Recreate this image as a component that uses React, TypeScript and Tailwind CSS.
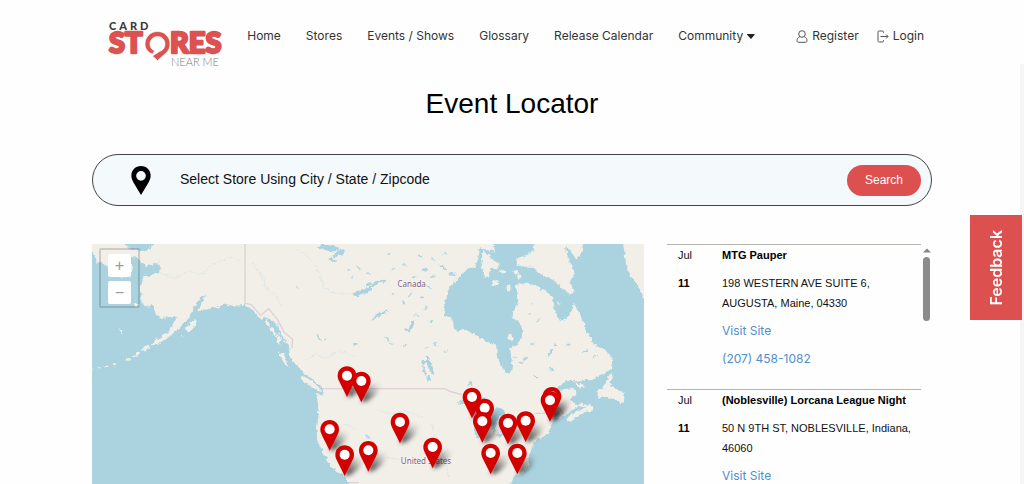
import { useState } from 'react';

const navItems = [
  { label: 'Home', href: '#home' },
  { label: 'Stores', href: '#stores' },
  { label: 'Events / Shows', href: '#events' },
  { label: 'Glossary', href: '#glossary' },
  { label: 'Release Calendar', href: '#releases' },
  { label: 'Community', href: '#community', hasDropdown: true },
];

const events = [
  {
    month: 'Jul',
    day: '11',
    title: 'MTG Pauper',
    address: '198 WESTERN AVE SUITE 6, AUGUSTA, Maine, 04330',
    phone: '(207) 458-1082',
  },
  {
    month: 'Jul',
    day: '11',
    title: '(Noblesville) Lorcana League Night',
    address: '50 N 9TH ST, NOBLESVILLE, Indiana, 46060',
  },
];

// tip of each marker, in map units
const markers = [
  [765, 459],
  [808, 475],
  [713, 620],
  [758, 696],
  [829, 683],
  [924, 598],
  [1022, 673],
  [1140, 523],
  [1178, 556],
  [1171, 596],
  [1248, 601],
  [1301, 594],
  [1380, 521],
  [1374, 533],
  [1196, 691],
  [1276, 691],
];

// x, y, length, thickness, angle
const lakes = [
  [712, 12, 60, 16, 10],
  [740, 28, 44, 14, -30],
  [722, 48, 26, 8, 20],
  [690, 8, 30, 6, -10],
  [812, 143, 54, 16, -18],
  [792, 154, 22, 8, 40],
  [828, 122, 20, 8, -35],
  [680, 280, 26, 4, 60],
  [700, 286, 16, 3, -30],
  [790, 300, 16, 6, 0],
  [615, 128, 12, 4, 20],
  [770, 78, 10, 5, 0],
  [800, 72, 16, 4, 40],
  [782, 98, 12, 4, 70],
  [828, 90, 14, 4, 0],
  [846, 122, 38, 10, -30],
  [870, 112, 26, 8, -10],
  [868, 208, 46, 7, -20],
  [848, 222, 24, 6, -40],
  [958, 245, 34, 9, -65],
  [946, 258, 18, 7, 40],
  [1014, 366, 62, 13, 70],
  [1000, 352, 26, 8, -20],
  [996, 378, 36, 6, 70],
  [1010, 402, 18, 7, 90],
  [1137, 417, 14, 12, 0],
  [884, 285, 18, 5, 30],
  [896, 300, 12, 4, 0],
  [940, 305, 14, 4, -20],
  [1005, 312, 12, 4, 0],
  [1030, 300, 14, 4, 60],
  [1062, 322, 12, 4, -30],
  [975, 215, 18, 5, 20],
  [1000, 192, 16, 4, -40],
  [1016, 232, 12, 4, 0],
  [934, 176, 16, 5, 30],
  [902, 150, 12, 4, -20],
  [956, 150, 18, 4, -60],
  [990, 160, 14, 5, 0],
  [1010, 128, 18, 5, 20],
  [966, 100, 20, 5, -30],
  [1000, 78, 22, 7, 10],
  [1024, 98, 16, 5, -20],
  [1052, 70, 22, 5, 30],
  [1082, 90, 26, 5, 10],
  [1020, 44, 18, 6, 50],
  [984, 38, 14, 5, -10],
  [938, 64, 12, 4, 20],
  [904, 74, 16, 4, -40],
  [1060, 30, 14, 5, 0],
  [890, 30, 14, 4, 0],
  [1320, 180, 12, 4, 60],
  [1314, 210, 12, 4, 0],
  [1340, 230, 16, 4, -30],
  [1300, 345, 24, 6, -45],
  [1286, 356, 16, 5, 20],
  [1322, 300, 14, 5, 0],
  [1376, 326, 26, 7, -60],
  [1390, 302, 14, 5, 30],
  [1378, 375, 18, 6, 40],
  [1432, 302, 18, 5, 0],
  [1480, 322, 26, 6, -20],
  [1510, 338, 20, 5, -30],
  [1330, 400, 14, 5, 20],
  [1270, 340, 12, 5, 0],
  [827, 578, 14, 8, 60],
];

const islands = [
  // Aleutians
  'M262 232 L250 250 L236 276 L210 292 L190 304 L182 316 L200 314 L222 302 L244 284 L266 266 L288 244 L302 228Z',
  'M178 314 L160 322 L154 332 L168 330 L180 322Z',
  'M146 336 L128 346 L132 352 L146 344Z',
  'M122 352 L108 358 L106 364 L118 362Z',
  'M76 370 L66 374 L70 377 L80 374Z',
  'M56 376 L40 379 L42 382 L56 380Z',
  'M30 381 L20 384 L28 386Z',
  'M12 386 L4 388 L8 392Z',
  // Kodiak
  'M318 238 L300 250 L288 264 L292 276 L306 270 L318 258Z',
  'M272 292 L276 288 L282 291Z',
  'M84 268 L92 270 L98 284 L90 276Z',
  'M98 106 L108 110 L96 116 L90 110Z',
  'M130 194 L142 190 L150 196 L138 202Z',
  // Haida Gwaii and Vancouver Island
  'M566 338 L582 340 L586 356 L596 382 L584 372 L572 352Z',
  'M630 406 L650 414 L672 428 L688 444 L698 456 L682 452 L656 432 L636 420Z',
  // Alexander Archipelago
  'M524 240 L532 236 L540 256 L532 260Z',
  'M536 262 L548 258 L560 280 L554 288Z',
  'M556 292 L566 280 L576 304 L566 312Z',
  'M570 268 L580 282 L586 306 L578 296Z',
  // Arctic islands
  'M1180 32 L1196 42 L1208 62 L1230 72 L1222 88 L1204 86 L1198 108 L1186 114 L1178 96 L1174 66Z',
  'M1226 92 L1242 90 L1248 98 L1232 102Z',
  'M1204 124 L1222 120 L1230 128 L1216 140 L1206 136Z',
  'M1250 138 L1258 132 L1262 146 L1256 158 L1250 150Z',
  'M1270 94 L1280 90 L1286 98 L1276 104Z',
  'M1280 106 L1290 102 L1294 112 L1284 116Z',
  'M1402 186 L1408 184 L1408 194 L1403 193Z',
  'M1250 292 L1258 282 L1270 290 L1264 300 L1254 298Z',
  // Newfoundland, Nova Scotia, Anticosti
  'M1568 396 L1554 414 L1540 440 L1524 452 L1522 474 L1548 472 L1570 476 L1592 490 L1604 486 L1600 468 L1604 456 L1586 452 L1570 440 L1558 430 L1566 416Z',
  'M1430 544 L1436 528 L1458 514 L1480 508 L1498 496 L1512 500 L1508 512 L1484 516 L1464 528 L1446 542Z',
  'M1454 430 L1474 432 L1486 442 L1470 444Z',
  'M1464 490 L1484 494 L1496 498 L1482 502 L1466 498Z',
];

function PinIcon({ className }: { className?: string }) {
  return (
    <svg viewBox="0 0 20 30" className={className} aria-hidden="true">
      <path
        fillRule="evenodd"
        fill="currentColor"
        d="M10 0C4.300 0 0 4.300 0 9.800C0 12.600 1 14.700 2.200 17.100L10 30L17.800 17.100C19 14.700 20 12.600 20 9.800C20 4.300 15.700 0 10 0ZM10 5.200A5 5 0 1 1 10 15.200A5 5 0 1 1 10 5.200Z"
      />
    </svg>
  );
}

function Logo() {
  return (
    <svg viewBox="0 0 116 48" className="h-12 w-[116px]" role="img" aria-label="Card Stores Near Me">
      <g fontFamily="Lato, sans-serif">
        <text x="1" y="10" fontSize="11" fontWeight="900" letterSpacing="3" fill="#3a3a3a">
          CARD
        </text>
        <g
          fontSize="29"
          fontWeight="900"
          fill="#dc5252"
          stroke="#dc5252"
          strokeWidth="2.400"
          strokeLinejoin="round"
        >
          <text x="1" y="33">ST</text>
          <text x="62" y="33">RES</text>
        </g>
        <text x="63" y="46" fontSize="11" fontWeight="300" fill="#777">
          NEAR ME
        </text>
      </g>
      <path
        d="M44.500 34C40 32.500 37 28.500 37 24C37 17 42.500 11.500 49.500 11.500C56.500 11.500 62 17 62 24C62 28 60.500 31 57.500 33.500L49.500 40.500L44.500 36L51.500 31.500C55 30.500 57 27.500 57 24C57 19.800 53.700 16.500 49.500 16.500C45.300 16.500 42 19.800 42 24C42 27 43.500 29.500 46.500 31Z"
        fill="#dc5252"
        stroke="#fefefe"
        strokeWidth="0.600"
      />
    </svg>
  );
}

function UserIcon() {
  return (
    <svg viewBox="0 0 12 13" className="h-[13px] w-3" fill="none" stroke="#555" aria-hidden="true">
      <circle cx="6" cy="4" r="3.300" />
      <path d="M3.700 6.800C1.900 7.500 1 8.900 1 10.700C1 11.700 1.600 12.300 2.600 12.300H9.400C10.400 12.300 11 11.700 11 10.700C11 8.900 10.100 7.500 8.300 6.800" />
    </svg>
  );
}

function LoginIcon() {
  return (
    <svg viewBox="0 0 12 13" className="h-[13px] w-3" fill="none" stroke="#555" aria-hidden="true">
      <path d="M6.500 3V2.200C6.500 1.400 6 1 5.300 1H2.200C1.300 1 1 1.400 1 2.200V10.800C1 11.600 1.300 12 2.200 12H5.300C6 12 6.500 11.600 6.500 10.800V10" />
      <path d="M3.500 6.500H11M9 4.500L11 6.500L9 8.500" />
    </svg>
  );
}

function EventMap() {
  return (
    <svg
      viewBox="0 0 1656 720"
      preserveAspectRatio="xMidYMin slice"
      className="h-full w-full"
      role="img"
      aria-label="Map of events"
    >
      <defs>
        <filter id="coast" x="0" y="0" width="100%" height="100%">
          <feTurbulence type="fractalNoise" baseFrequency="0.09" numOctaves="3" seed="4" />
          <feDisplacementMap in="SourceGraphic" scale="14" xChannelSelector="R" yChannelSelector="G" />
        </filter>
        <filter id="soft" x="-50%" y="-50%" width="200%" height="200%">
          <feGaussianBlur stdDeviation="6" />
        </filter>
        <linearGradient id="fade" x1="0" y1="1" x2="1" y2="0">
          <stop offset="0" stopColor="#000" stopOpacity="0.8" />
          <stop offset="0.800" stopColor="#000" stopOpacity="0.08" />
        </linearGradient>
      </defs>

      <rect width="1656" height="720" fill="#f2efe9" />
      <g filter="url(#coast)">
        <rect x="-20" y="-20" width="1700" height="760" fill="#f2efe9" />

        {/* rivers */}
        <g fill="none" stroke="#d5e3e4" strokeWidth="2">
          <path d="M612 16L640 30L664 58L686 96L694 130L722 146L770 152L800 146" />
          <path d="M160 88L200 84L244 104L290 82L330 92L360 62L420 36L452 60" />
          <path d="M480 60L506 86L520 130L548 150L570 190" />
          <path d="M640 350L670 330L700 344L740 320L790 336" />
          <path d="M720 560L760 540L790 556M860 500L900 510L940 500L990 520" />
          <path d="M1020 540L1030 600L1060 640L1070 700M880 640L960 650" />
        </g>

        <g fill="#aad3df">
          <path
            transform="translate(-6 -12)"
            d="M-20 30L6 40L20 55L18 68L32 66L45 76L60 85L75 100L98 112L110 105L122 100L130 85L120 60L135 48L148 60L165 78L185 75L205 66L210 80L207 100L190 100L180 110L165 105L155 120L148 150L155 165L150 180L165 195L175 200L188 195L198 225L215 236L240 228L262 232L285 250L305 215L318 190L332 172L350 168L335 186L325 214L345 210L365 205L385 200L400 190L425 198L460 195L480 205L500 222L515 240L525 232L548 240L565 262L580 290L596 315L600 345L610 365L628 385L640 400L660 412L680 430L698 445L704 462L690 466L678 458L684 490L685 530L680 570L682 605L700 635L712 665L735 690L765 710L790 760H-20Z"
          />
          <path transform="translate(-6 -12)" d="M96 0H200L180 28L150 34L120 28Z" />
          <path
            transform="translate(834 -12)"
            d="M330 22L325 55L315 80L290 90L270 108L240 140L228 170L223 205L225 228L243 232L254 272L290 270L320 285L350 305L382 318L384 355L400 385L415 402L428 390L425 360L420 325L440 315L455 295L458 270L448 245L428 235L430 215L445 185L440 160L438 135L460 130L495 135L520 150L550 175L553 205L565 235L580 242L598 225L610 188L625 215L640 245L655 285L680 320L700 325L725 350L727 385L700 402L660 420L620 425L590 420L570 436L545 462L575 448L612 444L620 462L600 476L622 496L640 490L596 518L575 530L555 536L540 560L538 580L520 590L498 600L485 625L475 655L478 680L455 700L430 712L412 760H850V190L822 175L805 140L785 110L770 85L765 50L755 -20H645L635 35L620 60L600 30L585 20L600 70L615 100L600 120L612 160L600 162L575 145L550 120L530 110L500 95L490 80L460 80L440 75L442 55L470 45L490 30L500 -20H365L375 35L350 30Z"
          />
          {/* Great Lakes */}
          <path d="M1096 478L1120 462L1150 458L1180 462L1196 478L1184 488L1150 482L1120 484Z" />
          <path d="M1150 516L1164 506L1168 560L1160 582L1148 574Z" />
          <path d="M1196 498L1216 490L1240 500L1246 520L1222 514L1214 540L1206 570L1198 550Z" />
          <path d="M1212 572L1240 558L1262 552L1250 568L1222 580Z" />
          <path d="M1262 540L1284 532L1296 538L1276 546Z" />
          {lakes.map(([x, y, length, thickness, angle], index) => (
            <ellipse
              key={index}
              cx={x}
              cy={y}
              rx={length / 2}
              ry={thickness / 2}
              transform={`rotate(${angle} ${x} ${y})`}
            />
          ))}
        </g>

        <g fill="#f2efe9" transform="translate(-6 -12)">
          {islands.map((d) => (
            <path key={d} d={d} />
          ))}
        </g>
      </g>

      {/* borders */}
      <g fill="none" stroke="#d9c8cf" strokeWidth="4" strokeOpacity="0.8">
        <path d="M459 0V178L478 182L506 214L530 194L556 226L576 264L602 286L600 312" />
        <path d="M692 434H1056L1080 444L1110 452" />
        <path d="M1330 508H1372L1392 490L1404 494L1414 510" />
        <path d="M768 716H800" />
      </g>

      <g
        fontFamily="'Noto Sans', sans-serif"
        fontSize="24"
        fill="#7d6585"
        stroke="#f7f4f2"
        strokeWidth="5"
        paintOrder="stroke"
        textAnchor="middle"
      >
        <text x="959" y="129">Canada</text>
        <text x="1002" y="659">United States</text>
      </g>

      <g>
        {markers.map(([x, y]) => (
          <path
            key={`${x}-${y}`}
            d={`M${x} ${y}L${x + 8} ${y - 38}Q${x + 36} ${y - 68} ${x + 54} ${y - 52}Q${x + 58} ${y - 28} ${x + 18} ${y - 4}Z`}
            fill="url(#fade)"
            filter="url(#soft)"
          />
        ))}
        {markers.map(([x, y]) => (
          <g key={`${x}-${y}`} transform={`translate(${x} ${y})`}>
            <path
              d="M0 0L-22 -44C-26 -52 -28 -57 -28 -64C-28 -80 -16 -92 0 -92C16 -92 28 -80 28 -64C28 -57 26 -52 22 -44Z"
              fill="#d30000"
            />
            <circle cy="-64" r="15" fill="#fff" />
          </g>
        ))}
      </g>
    </svg>
  );
}

export default function App() {
  const [location, setLocation] = useState('');

  return (
    <div className="relative overflow-hidden bg-[#fefefe] font-['Liberation_Sans',sans-serif] text-black">
      <div className="mx-auto w-full max-w-[840px]">
        {/* Header */}
        <header className="flex h-[72px] items-center justify-between pr-2 pl-4 pt-4">
          <a href="#home">
            <Logo />
          </a>
          <nav className="flex items-center gap-[25px] pb-4 font-['Inter',sans-serif] text-xs whitespace-nowrap text-[#333]">
            {navItems.map((item) => (
              <a key={item.label} href={item.href} className="flex items-center gap-1">
                {item.label}
                {item.hasDropdown && (
                  <svg viewBox="0 0 8 5" className="h-[5px] w-2" aria-hidden="true">
                    <path d="M0 0.500C0 0 0.300 0 0.800 0H7.200C7.700 0 8 0.300 7.600 0.800L4.500 4.600C4.200 5 3.800 5 3.500 4.600L0.300 0.900Z" fill="#222" />
                  </svg>
                )}
              </a>
            ))}
            <div className="flex items-center gap-[18px] pl-4">
              <a href="#register" className="flex items-center gap-1">
                <UserIcon />
                Register
              </a>
              <a href="#login" className="flex items-center gap-1">
                <LoginIcon />
                Login
              </a>
            </div>
          </nav>
        </header>

        <h1 className="pt-3 text-center text-[28px] leading-10">Event Locator</h1>

        {/* Search */}
        <form
          className="mt-[30px] flex h-[52px] items-center rounded-full border border-[#444] bg-[#f4f9fc] pr-[10px] pl-[38px]"
          onSubmit={(e) => e.preventDefault()}
        >
          <label htmlFor="location" className="mr-[29px]">
            <PinIcon className="h-[29px] w-5" />
          </label>
          <input
            id="location"
            value={location}
            onChange={(e) => setLocation(e.target.value)}
            placeholder="Select Store Using City / State / Zipcode"
            aria-label="Select Store Using City / State / Zipcode"
            className="min-w-0 flex-1 bg-transparent pb-[3px] text-sm outline-none placeholder:text-[#111]"
          />
          <button
            type="submit"
            className="h-[31px] cursor-pointer rounded-full bg-[#dc5050] px-[18px] text-xs text-white"
          >
            Search
          </button>
        </form>

        {/* Map and events */}
        <main className="mt-[38px] flex h-60">
          <section className="relative mr-[23px] min-w-0 flex-1">
            <EventMap />
            <div className="absolute top-1 left-[7px] flex h-[60px] w-[41px] flex-col items-center gap-1 rounded-xs border-2 border-black/15 pt-1">
              {['+', '−'].map((sign) => (
                <button
                  key={sign}
                  aria-label={sign === '+' ? 'Zoom in' : 'Zoom out'}
                  className="flex h-[23px] w-[23px] cursor-pointer items-center justify-center rounded-xs bg-white text-base leading-none text-[#999]"
                >
                  {sign}
                </button>
              ))}
            </div>
          </section>

          <section className="h-full w-[254px] overflow-y-auto [scrollbar-width:none]">
            {events.map((event) => (
              <article
                key={event.title}
                className="flex border-t border-[#b5b5b0] pb-5 pl-[11px] text-[11px] leading-5 text-[#111]"
              >
                <div className="flex w-11 shrink-0 flex-col gap-2">
                  <span>{event.month}</span>
                  <strong className="text-black">{event.day}</strong>
                </div>
                <div className="flex flex-col items-start gap-2">
                  <h2 className="font-bold whitespace-nowrap text-black">{event.title}</h2>
                  <p>{event.address}</p>
                  <a href="#site" className="font-['Inter',sans-serif] text-xs leading-5 text-[#4f8fcb]">
                    Visit Site
                  </a>
                  {event.phone && (
                    <a
                      href="tel:2074581082"
                      className="font-['Inter',sans-serif] text-xs leading-5 text-[#4f8fcb]"
                    >
                      {event.phone}
                    </a>
                  )}
                </div>
              </article>
            ))}
          </section>
          <div className="flex w-[11px] flex-col items-center gap-1 pt-1" aria-hidden="true">
            <svg viewBox="0 0 8 5" className="h-[5px] w-2">
              <path d="M4 0.500L8 4.500H0Z" fill="#858585" />
            </svg>
            <div className="h-16 w-[7px] rounded-full bg-[#8b8b8b]" />
          </div>
        </main>
      </div>

      <div className="absolute top-16 right-0 bottom-0 w-1 bg-[#f5f5f5]" aria-hidden="true" />
      <button className="absolute top-[215px] right-[2px] flex h-[105px] w-[52px] cursor-pointer items-center justify-center bg-[#dc5050] font-['Inter',sans-serif] text-base font-semibold text-white">
        <span className="rotate-180 [writing-mode:vertical-rl]">Feedback</span>
      </button>
    </div>
  );
}
